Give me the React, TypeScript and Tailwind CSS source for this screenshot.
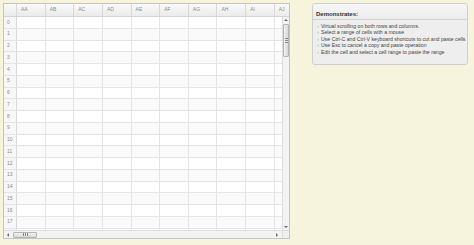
import React from "react";

const cols = ["AA", "AB", "AC", "AD", "AE", "AF", "AG", "AH", "AI", "AJ"];
const rows = Array.from({ length: 18 }, (_, i) => i);

const notes = [
  "Virtual scrolling on both rows and columns.",
  "Select a range of cells with a mouse",
  "Use Ctrl-C and Ctrl-V keyboard shortcuts to cut and paste cells",
  "Use Esc to cancel a copy and paste operation",
  "Edit the cell and select a cell range to paste the range",
];

function VScrollbar() {
  return (
    <div className="flex w-[7px] flex-col items-center border-l border-[#dcdcdc] bg-[#f3f3f3]">
      <div className="mt-[2px] h-0 w-0 border-x-[2px] border-b-[2px] border-x-transparent border-b-[#6b6b6b]" />
      <div className="mt-[3px] flex h-[33px] w-[6px] items-center justify-center rounded-[1px] border border-[#b4b4b4] bg-gradient-to-r from-[#f2f2f2] to-[#d8d8d8]">
        <div className="flex flex-col gap-[1px]">
          <div className="h-px w-[3px] bg-[#8a8a8a]" />
          <div className="h-px w-[3px] bg-[#8a8a8a]" />
          <div className="h-px w-[3px] bg-[#8a8a8a]" />
        </div>
      </div>
      <div className="flex-1" />
      <div className="mb-[2px] h-0 w-0 border-x-[2px] border-t-[2px] border-x-transparent border-t-[#6b6b6b]" />
    </div>
  );
}

function HScrollbar() {
  return (
    <div className="flex h-[8px] flex-1 items-center border-t border-[#dcdcdc] bg-[#f3f3f3]">
      <div className="ml-[3px] h-0 w-0 border-y-[2px] border-r-[2px] border-y-transparent border-r-[#6b6b6b]" />
      <div className="ml-[4px] flex h-[6px] w-[24px] items-center justify-center rounded-[1px] border border-[#b4b4b4] bg-gradient-to-b from-[#f2f2f2] to-[#d8d8d8]">
        <div className="flex gap-[1px]">
          <div className="h-[3px] w-px bg-[#8a8a8a]" />
          <div className="h-[3px] w-px bg-[#8a8a8a]" />
          <div className="h-[3px] w-px bg-[#8a8a8a]" />
        </div>
      </div>
      <div className="flex-1" />
      <div className="mr-[4px] h-0 w-0 border-y-[2px] border-l-[2px] border-y-transparent border-l-[#6b6b6b]" />
    </div>
  );
}

function Grid() {
  return (
    <div className="ml-[3px] mt-[3px] flex h-[236px] w-[287px] flex-col overflow-hidden border border-[#c4c4c4] bg-white">
      {/* header */}
      <div className="flex h-[13px] shrink-0 overflow-hidden border-b border-[#d4d4d4] bg-gradient-to-b from-[#fafafa] to-[#ebebeb]">
        <div className="w-[13px] shrink-0 border-r border-[#d8d8d8]" />
        {cols.map((c) => (
          <div
            key={c}
            className="flex w-[28.65px] shrink-0 items-center border-r border-[#d8d8d8] pl-[4px] text-[5px] text-[#8c8c8c]"
          >
            {c}
          </div>
        ))}
      </div>
      {/* body */}
      <div className="flex min-h-0 flex-1">
        <div className="flex min-w-0 flex-1 flex-col overflow-hidden">
          {rows.map((r) => (
            <div
              key={r}
              className={`flex h-[11.75px] shrink-0 border-b border-[#e4e4e4] ${r % 2 === 1 ? "bg-[#fafafa]" : "bg-white"}`}
            >
              <div className="flex w-[13px] shrink-0 items-center border-r border-[#d8d8d8] bg-[#f7f7f7] pl-[3px] text-[5px] text-[#8c8c8c]">
                {r}
              </div>
              {cols.map((c) => (
                <div key={c} className="w-[28.65px] shrink-0 border-r border-[#e4e4e4]" />
              ))}
            </div>
          ))}
          <div className="flex flex-1">
            <div className="w-[13px] shrink-0 border-r border-[#d8d8d8] bg-[#f7f7f7]" />
            {cols.map((c) => (
              <div key={c} className="w-[28.65px] shrink-0 border-r border-[#e4e4e4]" />
            ))}
          </div>
        </div>
        <VScrollbar />
      </div>
      <div className="flex h-[8px] shrink-0">
        <HScrollbar />
        <div className="w-[7px] border-l border-t border-[#dcdcdc] bg-[#efefef]" />
      </div>
    </div>
  );
}

function Demo() {
  return (
    <div className="ml-[22px] mt-[3px] w-[156px] self-start overflow-hidden rounded-[3px] border border-[#cfcfcf] bg-[#eeeeee]">
      <div className="h-[16px] border-b border-[#d2d2d2] bg-gradient-to-b from-[#f7f7f7] to-[#ececec] pl-[3px] pt-[7px] text-[6px] font-bold leading-none text-[#333]">
        Demonstrates:
      </div>
      <ul className="flex flex-col pb-[8px] pl-[4px] pt-[3px]">
        {notes.map((n) => (
          <li key={n} className="flex h-[6.5px] items-center text-[5.2px] leading-none text-[#444]">
            <span className="w-[4px] text-[#b0b0b0]">›</span>
            <span className="whitespace-nowrap">{n}</span>
          </li>
        ))}
      </ul>
    </div>
  );
}

export default function App() {
  return (
    <div
      className="flex h-[245px] w-[474px] bg-[#f6f4dd]"
      style={{ fontFamily: '"Liberation Sans", Arial, sans-serif' }}
    >
      <Grid />
      <Demo />
    </div>
  );
}
